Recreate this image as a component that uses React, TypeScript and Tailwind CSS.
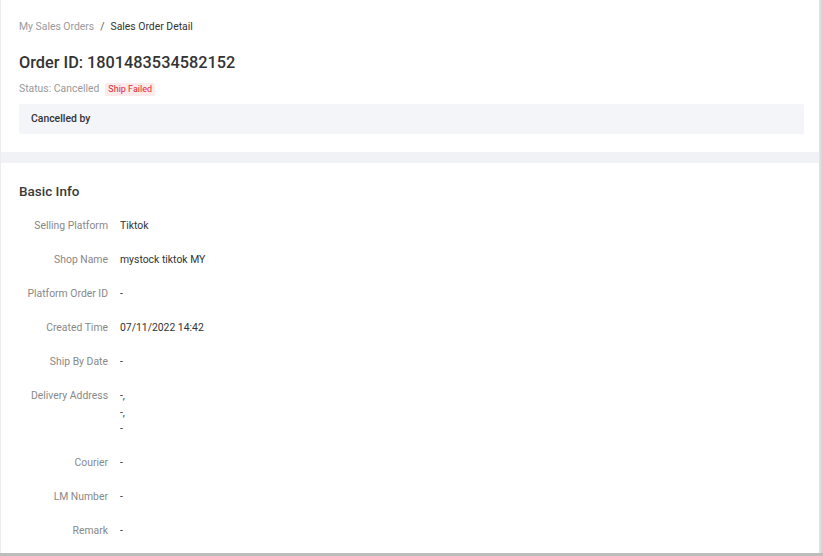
import React from "react";

const rows: { label: string; value: string[] }[] = [
  { label: "Selling Platform", value: ["Tiktok"] },
  { label: "Shop Name", value: ["mystock tiktok MY"] },
  { label: "Platform Order ID", value: ["-"] },
  { label: "Created Time", value: ["07/11/2022 14:42"] },
  { label: "Ship By Date", value: ["-"] },
  { label: "Delivery Address", value: ["-,", "-,", "-"] },
  { label: "Courier", value: ["-"] },
  { label: "LM Number", value: ["-"] },
  { label: "Remark", value: ["-"] },
];

export default function App() {
  return (
    <div
      className="w-[823px] h-[556px] overflow-hidden flex flex-col bg-[#c9c9c9]"
      style={{ fontFamily: "Roboto, 'Liberation Sans', sans-serif" }}
    >
      <div className="flex h-[553px] shrink-0">
        <div className="w-[819px] h-full flex flex-col bg-[#f1f2f6] border-l border-[#ececec]">
          <div className="bg-white h-[152px] shrink-0 pl-[18px] pr-[15px] pt-[20px]">
            <div className="text-[10.4px] leading-[14px] flex gap-[6px]">
              <span className="text-[#9a9a9a]">My Sales Orders</span>
              <span className="text-[#555]">/</span>
              <span className="text-[#333]">Sales Order Detail</span>
            </div>
            <div className="mt-[19px] text-[16.3px] leading-[20px] font-medium text-[#333]">
              Order ID: 1801483534582152
            </div>
            <div className="mt-[9px] flex items-center gap-[6px] text-[10.4px] leading-[14px]">
              <span className="text-[#999]">Status: Cancelled</span>
              <span className="bg-[#fdeaea] text-[#e0263a] text-[9px] leading-[13px] px-[3px] rounded-[2px]">
                Ship Failed
              </span>
            </div>
            <div className="mt-[8px] h-[30px] bg-[#f4f5f9] flex items-center pl-[12px] text-[10.4px] font-medium text-[#333] rounded-[2px]">
              Cancelled by
            </div>
          </div>
          <div className="h-[11px] shrink-0" />
          <div className="flex-1 bg-white pl-[18px] pt-[19px]">
            <div className="text-[13.5px] leading-[18px] font-medium text-[#3a3a3a]">Basic Info</div>
            <div className="mt-[18px] flex flex-col">
              {rows.map((r) => (
                <div key={r.label} className="flex text-[10.4px] leading-[16.7px] mb-[17.3px]">
                  <div className="w-[89px] text-right text-[#888] whitespace-nowrap">{r.label}</div>
                  <div className="ml-[12px] text-[#333]">
                    {r.value.map((v, i) => (
                      <div key={i}>{v}</div>
                    ))}
                  </div>
                </div>
              ))}
            </div>
          </div>
        </div>
        <div className="w-[4px] h-full bg-gradient-to-r from-[#e6e6e6] to-[#cfcfcf]" />
      </div>
      <div className="h-[3px] bg-[#bdbdbd]" />
    </div>
  );
}
